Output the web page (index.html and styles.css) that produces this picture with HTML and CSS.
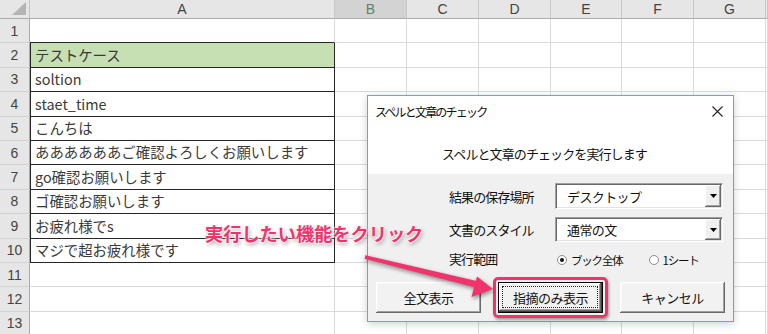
FILE: index.html
```html
<!DOCTYPE html>
<html lang="ja">
<head>
<meta charset="utf-8">
<title>スペルと文章のチェック</title>
<link rel="stylesheet" href="styles.css">
</head>
<body>
<div class="screen">
  <div class="sheet">
    <div class="corner"></div>
    <div class="colhead">A</div>
    <div class="colhead sel">B</div>
    <div class="colhead">C</div>
    <div class="colhead">D</div>
    <div class="colhead">E</div>
    <div class="colhead">F</div>
    <div class="colhead">G</div>
    <div class="colhead tail"></div>

    <div class="rowhead">1</div><div class="cell above"></div><div class="cell"></div><div class="cell"></div><div class="cell"></div><div class="cell"></div><div class="cell"></div><div class="cell"></div><div class="cell"></div>
    <div class="rowhead">2</div><div class="cell t hdr">テストケース</div><div class="cell"></div><div class="cell"></div><div class="cell"></div><div class="cell"></div><div class="cell"></div><div class="cell"></div><div class="cell"></div>
    <div class="rowhead">3</div><div class="cell t">soltion</div><div class="cell"></div><div class="cell"></div><div class="cell"></div><div class="cell"></div><div class="cell"></div><div class="cell"></div><div class="cell"></div>
    <div class="rowhead">4</div><div class="cell t">staet_time</div><div class="cell"></div><div class="cell"></div><div class="cell"></div><div class="cell"></div><div class="cell"></div><div class="cell"></div><div class="cell"></div>
    <div class="rowhead">5</div><div class="cell t">こんちは</div><div class="cell"></div><div class="cell"></div><div class="cell"></div><div class="cell"></div><div class="cell"></div><div class="cell"></div><div class="cell"></div>
    <div class="rowhead">6</div><div class="cell t">ああああああご確認よろしくお願いします</div><div class="cell"></div><div class="cell"></div><div class="cell"></div><div class="cell"></div><div class="cell"></div><div class="cell"></div><div class="cell"></div>
    <div class="rowhead">7</div><div class="cell t">go確認お願いします</div><div class="cell"></div><div class="cell"></div><div class="cell"></div><div class="cell"></div><div class="cell"></div><div class="cell"></div><div class="cell"></div>
    <div class="rowhead">8</div><div class="cell t">ゴ確認お願いします</div><div class="cell"></div><div class="cell"></div><div class="cell"></div><div class="cell"></div><div class="cell"></div><div class="cell"></div><div class="cell"></div>
    <div class="rowhead">9</div><div class="cell t">お疲れ様でs</div><div class="cell"></div><div class="cell"></div><div class="cell"></div><div class="cell"></div><div class="cell"></div><div class="cell"></div><div class="cell"></div>
    <div class="rowhead">10</div><div class="cell t">マジで超お疲れ様です</div><div class="cell"></div><div class="cell"></div><div class="cell"></div><div class="cell"></div><div class="cell"></div><div class="cell"></div><div class="cell"></div>
    <div class="rowhead">11</div><div class="cell"></div><div class="cell"></div><div class="cell"></div><div class="cell"></div><div class="cell"></div><div class="cell"></div><div class="cell"></div><div class="cell"></div>
    <div class="rowhead">12</div><div class="cell"></div><div class="cell"></div><div class="cell"></div><div class="cell"></div><div class="cell"></div><div class="cell"></div><div class="cell"></div><div class="cell"></div>
    <div class="rowhead">13</div><div class="cell"></div><div class="cell"></div><div class="cell"></div><div class="cell"></div><div class="cell"></div><div class="cell"></div><div class="cell"></div><div class="cell"></div>
  </div>

  <div class="dialog">
    <div class="titlebar">
      <span class="title">スペルと文章のチェック</span>
      <svg class="close" width="11" height="11" viewBox="0 0 11 11"><path d="M0.5 0.5 L10.5 10.5 M10.5 0.5 L0.5 10.5" stroke="#222" stroke-width="1.1" fill="none"/></svg>
    </div>
    <div class="message">スペルと文章のチェックを実行します</div>
    <div class="form">
      <div class="fields">
        <span class="lbl">結果の保存場所</span>
        <div class="combo"><span class="combo-text">デスクトップ</span><span class="drop"><svg width="7" height="4" viewBox="0 0 7 4"><path d="M0 0 H7 L3.5 4 Z" fill="#000"/></svg></span></div>
        <span class="lbl">文書のスタイル</span>
        <div class="combo"><span class="combo-text">通常の文</span><span class="drop"><svg width="7" height="4" viewBox="0 0 7 4"><path d="M0 0 H7 L3.5 4 Z" fill="#000"/></svg></span></div>
        <span class="lbl">実行範囲</span>
        <div class="radios">
          <span class="radio-item"><span class="radio on"></span>ブック全体</span>
          <span class="radio-item"><span class="radio"></span>1シート</span>
        </div>
      </div>
      <div class="buttons">
        <button class="btn">全文表示</button>
        <div class="highlight"><button class="btn default">指摘のみ表示</button></div>
        <button class="btn">キャンセル</button>
      </div>
    </div>
  </div>

  <svg class="arrow" width="768" height="334" viewBox="0 0 768 334">
    <polygon points="365.4,255.3 478.8,281.4 477.4,288 364.6,258.7" fill="#f1336c"/>
    <polygon points="493,289 477,276.5 471.5,297" fill="#f1336c"/>
  </svg>
  <div class="callout">実行したい機能をクリック</div>
</div>
</body>
</html>
```

FILE: styles.css
```css
html, body {
  margin: 0;
  padding: 0;
}
body {
  width: 768px;
  height: 334px;
  overflow: hidden;
  background: #fff;
  font-family: "Noto Sans CJK JP", "Noto Sans", sans-serif;
}
.screen {
  position: relative;
  width: 768px;
  height: 334px;
  overflow: hidden;
}

/* spreadsheet */
.sheet {
  display: grid;
  grid-template-columns: 30px 305px 72px 72px 72px 71px 72px 72px 1fr;
  grid-template-rows: 19px repeat(13, 24.4px);
}
.sheet > div {
  box-sizing: border-box;
}
.corner {
  position: relative;
  background: #e6e6e6;
  border-right: 1px solid #c4c4c4;
  border-bottom: 1px solid #ababab;
}
.corner::after {
  content: "";
  position: absolute;
  right: 3px;
  bottom: 3px;
  border-style: solid;
  border-width: 0 0 13px 14px;
  border-color: transparent transparent #b4b4b4 transparent;
}
.colhead {
  display: flex;
  align-items: center;
  justify-content: center;
  background: #e6e6e6;
  border-right: 1px solid #c8c8c8;
  border-bottom: 1px solid #ababab;
  font-family: "Liberation Sans", "Noto Sans", sans-serif;
  font-size: 14px;
  color: #444;
  line-height: 1;
}
.colhead.sel {
  background: #d3d3d3;
  color: #62806a;
}
.rowhead {
  display: flex;
  align-items: center;
  justify-content: center;
  background: #e6e6e6;
  border-right: 1px solid #ababab;
  border-bottom: 1px solid #d2d2d2;
  font-family: "Liberation Sans", "Noto Sans", sans-serif;
  font-size: 14px;
  color: #444;
  line-height: 1;
}
.cell {
  border-right: 1px solid #dadada;
  border-bottom: 1px solid #dadada;
}
.cell.above {
  border-bottom-color: #262626;
}
.cell.t {
  display: flex;
  align-items: center;
  padding-left: 5px;
  border-right-color: #262626;
  border-bottom-color: #262626;
  box-shadow: inset 1px 0 #262626;
  font-size: 14.4px;
  color: #3a3a3a;
  white-space: nowrap;
  line-height: 1;
}
.cell.hdr {
  background: #c6e0b4;
}

/* dialog window */
.dialog {
  position: absolute;
  left: 367px;
  top: 95px;
  width: 367px;
  height: 227px;
  box-sizing: border-box;
  border: 1px solid #6ea2d6;
  background: #f0f0f0;
  box-shadow: 0 2px 8px rgba(0, 0, 0, 0.18);
  display: flex;
  flex-direction: column;
  color: #111;
}
.titlebar {
  height: 31px;
  background: #fff;
  display: flex;
  align-items: center;
  justify-content: space-between;
  padding: 0 10px 0 7px;
}
.title {
  font-size: 12px;
  letter-spacing: -1.8px;
}
.close {
  display: block;
}
.message {
  height: 47px;
  box-sizing: border-box;
  padding: 5px 12px 0 0;
  background: #fff;
  display: flex;
  align-items: center;
  justify-content: center;
  font-size: 13px;
  letter-spacing: -0.9px;
}
.form {
  flex: 1;
  padding-top: 9px;
}
.fields {
  display: grid;
  grid-template-columns: 106px 168px;
  grid-template-rows: 26px 25px 16px;
  row-gap: 8px;
  padding-left: 81px;
}
.lbl {
  display: flex;
  align-items: center;
  font-size: 13px;
  letter-spacing: -0.9px;
}
.combo {
  display: flex;
  background: #fff;
  border: 1px solid;
  border-color: #a0a0a0 #fff #fff #a0a0a0;
  box-shadow: inset 1px 1px #696969, inset -1px -1px #e3e3e3;
  padding: 1px;
}
.combo-text {
  flex: 1;
  display: flex;
  align-items: center;
  padding-left: 10px;
  font-size: 13px;
  letter-spacing: -0.6px;
}
.drop {
  width: 16px;
  display: flex;
  align-items: center;
  justify-content: center;
  background: #f0f0f0;
  box-shadow: inset -1px -1px #696969, inset 1px 1px #fff, inset -2px -2px #a0a0a0;
}
.drop svg {
  display: block;
}
.radios {
  display: flex;
  align-items: center;
  gap: 26px;
  padding: 4px 0 0 2px;
  font-size: 11.5px;
  letter-spacing: -1.2px;
}
.radio-item {
  display: flex;
  align-items: center;
  gap: 4px;
}
.radio {
  width: 10px;
  height: 10px;
  box-sizing: border-box;
  border-radius: 50%;
  border: 1px solid #8c8c8c;
  background: #fff;
  display: flex;
  align-items: center;
  justify-content: center;
}
.radio.on::after {
  content: "";
  width: 4px;
  height: 4px;
  border-radius: 50%;
  background: #111;
}
.buttons {
  display: flex;
  align-items: center;
  gap: 12px;
  margin-top: 11px;
  padding-left: 8px;
}
.btn {
  width: 105px;
  height: 31px;
  box-sizing: border-box;
  padding: 0;
  border: none;
  background: #f2f2f2;
  box-shadow: inset -1px -1px #696969, inset 1px 1px #fff, inset -2px -2px #a0a0a0, inset 2px 2px #f8f8f8;
  font-family: "Noto Sans CJK JP", "Noto Sans", sans-serif;
  font-size: 13px;
  letter-spacing: -0.5px;
  color: #111;
}
.highlight {
  padding: 2px;
  border: 3px solid #f1336c;
  border-radius: 5px;
  box-shadow: 1px 2px 3px rgba(0, 0, 0, 0.35);
  display: flex;
}
.btn.default {
  position: relative;
  border: 1px solid #000;
  box-shadow: inset -1px -1px #3c3c3c, inset -2px -2px #696969, inset 1px 1px #fff, inset -3px -3px #a0a0a0;
}
.btn.default::after {
  content: "";
  position: absolute;
  left: 3px;
  top: 3px;
  right: 4px;
  bottom: 4px;
  border: 1px dotted #222;
}

/* annotation */
.arrow {
  position: absolute;
  left: 0;
  top: 0;
  pointer-events: none;
  filter: drop-shadow(1px 2px 2px rgba(0, 0, 0, 0.45));
}
.callout {
  position: absolute;
  left: 205px;
  top: 224px;
  font-size: 18.2px;
  font-weight: 700;
  line-height: 1;
  color: #f1336c;
  white-space: nowrap;
  text-shadow: 0 0 2px #fff, 0 0 2px #fff, 0 0 3px #fff, 1px 2px 4px rgba(0, 0, 0, 0.45);
}
```
